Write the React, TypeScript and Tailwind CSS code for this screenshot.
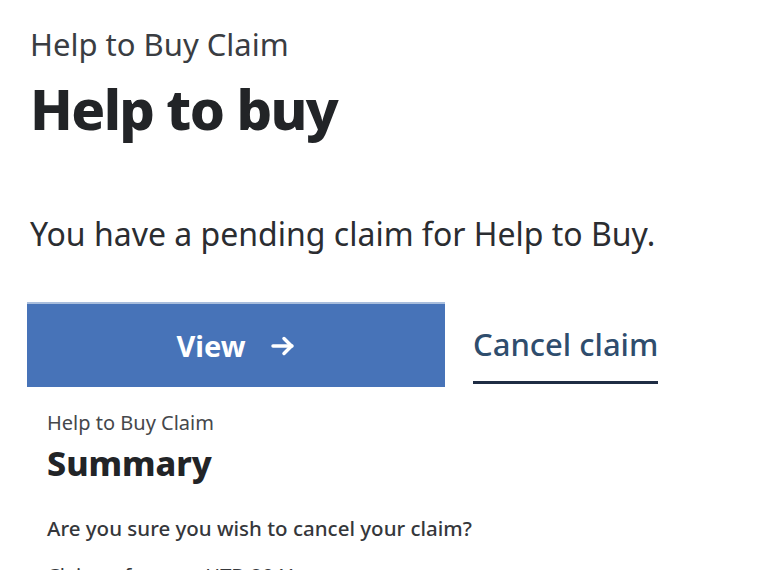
import React from "react";

function ArrowIcon() {
  return (
    <svg width="26" height="20" viewBox="0 0 26 20" fill="none" stroke="currentColor" strokeWidth="3.5" strokeLinecap="round" strokeLinejoin="round">
      <path d="M3 10h19" />
      <path d="M14 2.5 21.5 10 14 17.5" />
    </svg>
  );
}

export default function App() {
  return (
    <div className="h-[570px] w-[768px] overflow-hidden bg-white pl-[30px] pt-[29px] font-['Noto_Sans',sans-serif]">
      {/* Page header */}
      <p className="text-[31px] leading-none text-[#3a3d42]">Help to Buy Claim</p>
      <h1 className="mt-[20px] text-[56px] font-extrabold leading-none tracking-[-1.6px] text-[#222427]">Help to buy</h1>

      <p className="mt-[82px] text-[32px] leading-none text-[#2b2d31]">You have a pending claim for Help to Buy.</p>

      {/* Actions */}
      <div className="mt-[52px] -ml-[3px] flex items-start">
        <button className="flex h-[85px] w-[418px] items-center justify-center gap-[24px] border-t-2 border-[#a9bedd] bg-[#4773b8] text-white">
          <span className="text-[29px] font-bold leading-none">View</span>
          <ArrowIcon />
        </button>
        <a className="ml-[28px] mt-[27px] border-b-[3px] border-[#1f2d44] pb-[21px] text-[31px] font-medium leading-none text-[#2f4d6d]">
          Cancel claim
        </a>
      </div>

      {/* Summary preview */}
      <div className="pl-[17px] pt-[26px]">
        <p className="text-[20px] leading-none text-[#45474b]">Help to Buy Claim</p>
        <h2 className="mt-[13px] text-[34px] font-extrabold leading-none text-[#222427]">Summary</h2>
        <p className="mt-[38px] text-[20.5px] font-medium leading-none text-[#35373b]">Are you sure you wish to cancel your claim?</p>
        <p className="mt-[27px] text-[20px] leading-none text-[#35373b]">Claim reference: HTB-2041</p>
      </div>
    </div>
  );
}
